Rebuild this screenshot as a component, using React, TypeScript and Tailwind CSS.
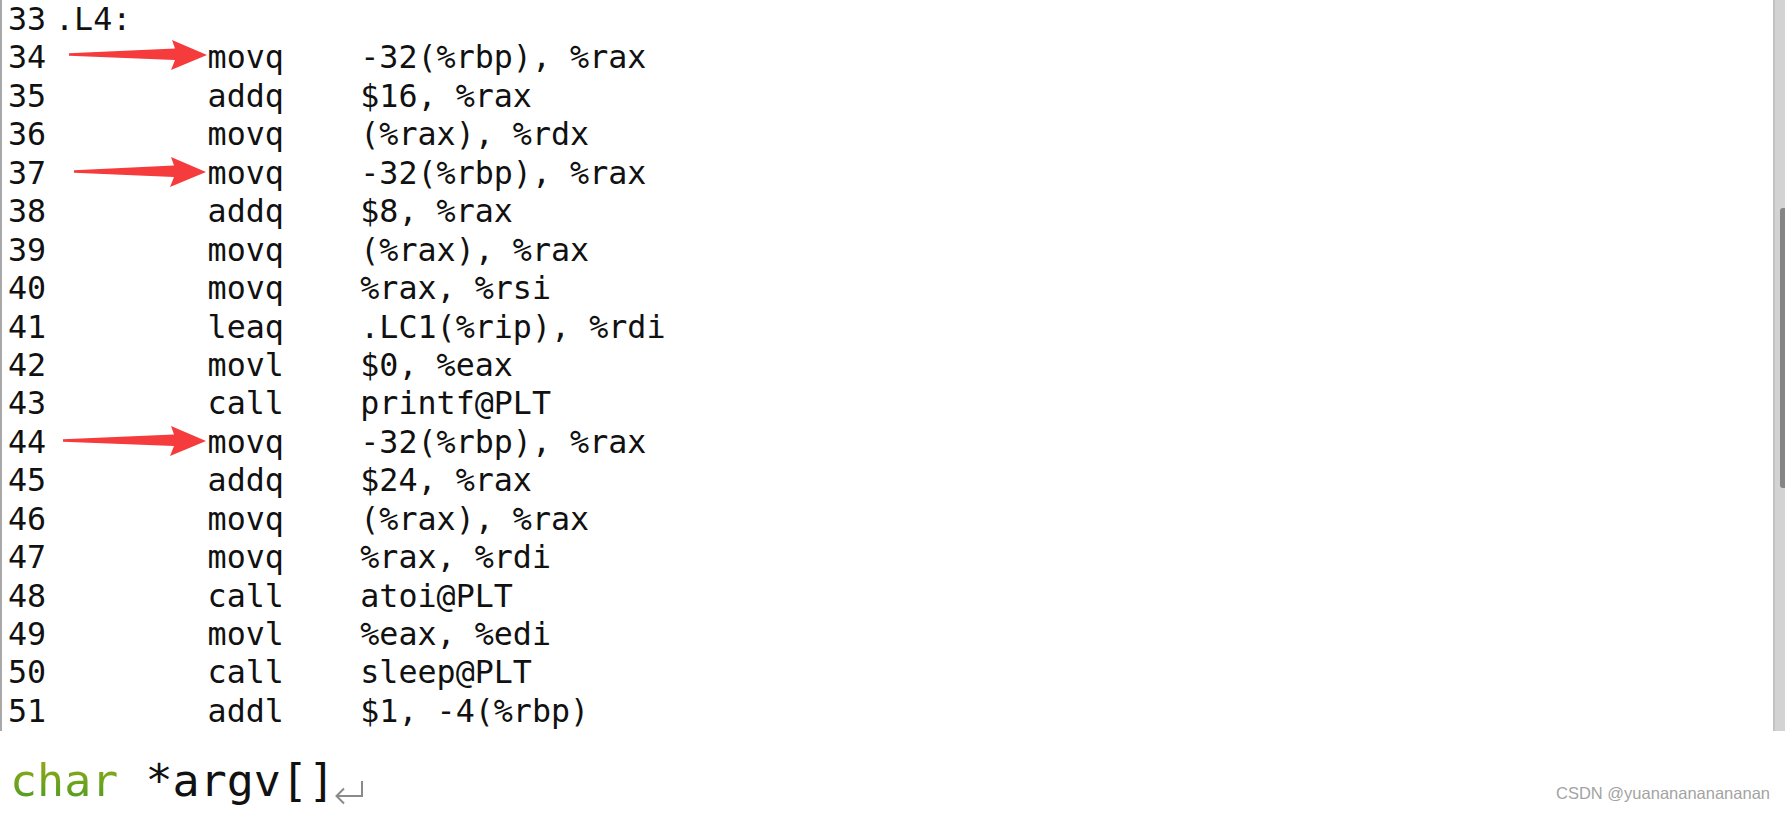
const lines: [number, string][] = [
  [33, ".L4:"],
  [34, "        movq    -32(%rbp), %rax"],
  [35, "        addq    $16, %rax"],
  [36, "        movq    (%rax), %rdx"],
  [37, "        movq    -32(%rbp), %rax"],
  [38, "        addq    $8, %rax"],
  [39, "        movq    (%rax), %rax"],
  [40, "        movq    %rax, %rsi"],
  [41, "        leaq    .LC1(%rip), %rdi"],
  [42, "        movl    $0, %eax"],
  [43, "        call    printf@PLT"],
  [44, "        movq    -32(%rbp), %rax"],
  [45, "        addq    $24, %rax"],
  [46, "        movq    (%rax), %rax"],
  [47, "        movq    %rax, %rdi"],
  [48, "        call    atoi@PLT"],
  [49, "        movl    %eax, %edi"],
  [50, "        call    sleep@PLT"],
  [51, "        addl    $1, -4(%rbp)"],
];

// red annotation arrow, tail on the left, tip on the right
function Arrow({ len, className }: { len: number; className: string }) {
  const pts = [
    [0, 13.2],
    [len - 32, 8.5],
    [len - 35, 0],
    [len, 15],
    [len - 36, 30],
    [len - 32, 20],
    [0, 15.8],
  ]
    .map((p) => p.join(","))
    .join(" ");
  return (
    <svg
      width={len}
      height={30}
      viewBox={`0 0 ${len} 30`}
      className={"absolute " + className}
    >
      <polygon points={pts} fill="#f53b3b" />
    </svg>
  );
}

export default function App() {
  return (
    <div className="relative h-[814px] w-[1785px] overflow-hidden bg-white font-['DejaVu_Sans_Mono',monospace] text-[#111]">
      <div className="flex h-[731px]">
        <div className="relative flex-1 border-l-2 border-[#a9a9a9]">
          {lines.map(([n, code]) => (
            <div key={n} className="flex h-[38.45px] items-center text-[31.7px] leading-[38.45px]">
              <span className="w-[53px] pl-[6px]">{n}</span>
              <span className="whitespace-pre">{code}</span>
            </div>
          ))}
          <Arrow len={138} className="left-[67px] top-[40px]" />
          <Arrow len={132} className="left-[72px] top-[157px]" />
          <Arrow len={143} className="left-[61px] top-[426px]" />
        </div>
        <div className="flex h-full w-[12px] justify-end border-l-2 border-[#c3c3c3] bg-[#d3d3d3]">
          <div className="mt-[208px] h-[280px] w-[5px] rounded-tl-[3px] rounded-bl-[3px] bg-[#858585]" />
        </div>
      </div>
      <div className="flex items-start pl-[10px] pt-[27px]">
        <span className="text-[45px] leading-[45px]">
          <span className="bg-gradient-to-b from-[#9aab14] to-[#3f9b22] bg-clip-text text-transparent">
            char
          </span>{" "}
          *argv[]
        </span>
        <svg width="32" height="27" viewBox="0 0 32 27" className="-ml-[2px] mt-[22px]">
          <path
            d="M29 1 V16 H4 M11 8.5 L3.5 16 L11 23.5"
            fill="none"
            stroke="#8a8a8a"
            strokeWidth="2"
          />
        </svg>
      </div>
      <div className="absolute right-[15px] top-[785px] font-['Liberation_Sans',Arial,sans-serif] text-[16.5px] leading-none text-[#a3a3a3]">
        CSDN @yuananananananan
      </div>
    </div>
  );
}
